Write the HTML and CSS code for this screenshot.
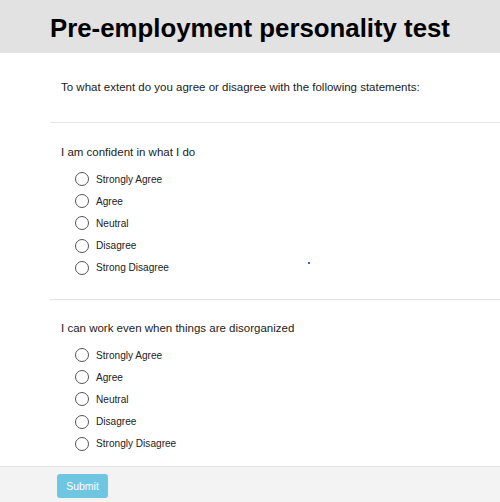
FILE: index.html
```html
<!DOCTYPE html>
<html>
<head>
<meta charset="utf-8">
<link rel="stylesheet" href="styles.css">
</head>
<body>
<header class="top">
  <h1 class="title">Pre-employment personality test</h1>
</header>
<main class="survey">
  <section class="block intro">
    <p class="intro-text">To what extent do you agree or disagree with the following statements:</p>
  </section>
  <section class="block q1">
    <p class="question">I am confident in what I do</p>
    <ul class="options">
      <li class="option"><span class="radio"></span>Strongly Agree</li>
      <li class="option"><span class="radio"></span>Agree</li>
      <li class="option"><span class="radio"></span>Neutral</li>
      <li class="option"><span class="radio"></span>Disagree</li>
      <li class="option"><span class="radio"></span>Strong Disagree</li>
    </ul>
  </section>
  <section class="block q2">
    <p class="question">I can work even when things are disorganized</p>
    <ul class="options">
      <li class="option"><span class="radio"></span>Strongly Agree</li>
      <li class="option"><span class="radio"></span>Agree</li>
      <li class="option"><span class="radio"></span>Neutral</li>
      <li class="option"><span class="radio"></span>Disagree</li>
      <li class="option"><span class="radio"></span>Strongly Disagree</li>
    </ul>
  </section>
</main>
<footer class="bottom">
  <button class="submit">Submit</button>
</footer>
<span class="cursor-dot"></span>
</body>
</html>
```
FILE: styles.css
```css
* { box-sizing: border-box; }
html, body { margin: 0; padding: 0; }
body {
  font-family: "Liberation Sans", Arial, sans-serif;
  color: #222;
  background: #fff;
  width: 500px;
  height: 502px;
  overflow: hidden;
  position: relative;
}
.top {
  background: #e2e2e2;
  height: 53px;
  padding-left: 50px;
  display: flex;
  align-items: center;
}
.title {
  margin: 0;
  font-size: 25.8px;
  font-weight: bold;
  color: #000;
  line-height: 30px;
  padding-top: 3px;
}
.survey {
  margin-left: 50px;
}
.block {
  padding: 0 11px;
}
.intro {
  padding-top: 26px;
  padding-bottom: 27px;
}
.intro-text, .question {
  margin: 0;
  font-size: 11.5px;
  line-height: 16px;
}
.q1 {
  border-top: 1px solid #e4e4e4;
  padding-top: 21px;
  padding-bottom: 20px;
}
.q2 {
  border-top: 1px solid #e4e4e4;
  padding-top: 20px;
  padding-bottom: 11px;
}
.options {
  list-style: none;
  margin: 8px 0 0;
  padding: 0 0 0 14px;
}
.option {
  height: 22.2px;
  display: flex;
  align-items: center;
  font-size: 10.1px;
  color: #222;
}
.radio {
  width: 14px;
  height: 14px;
  border: 1px solid #555;
  border-radius: 50%;
  margin-right: 7px;
  flex: none;
}
.bottom {
  border-top: 1px solid #e4e4e4;
  background: #f3f3f3;
  height: 36px;
  padding: 7px 0 0 57px;
}
.submit {
  width: 51px;
  height: 24px;
  background: #6ec6e2;
  border: none;
  border-radius: 3px;
  color: #fff;
  font-family: "Liberation Sans", Arial, sans-serif;
  font-size: 10.5px;
  padding: 0;
}
.cursor-dot {
  position: absolute;
  left: 308px;
  top: 262px;
  width: 2px;
  height: 2px;
  background: #3a5ee0;
}
```
